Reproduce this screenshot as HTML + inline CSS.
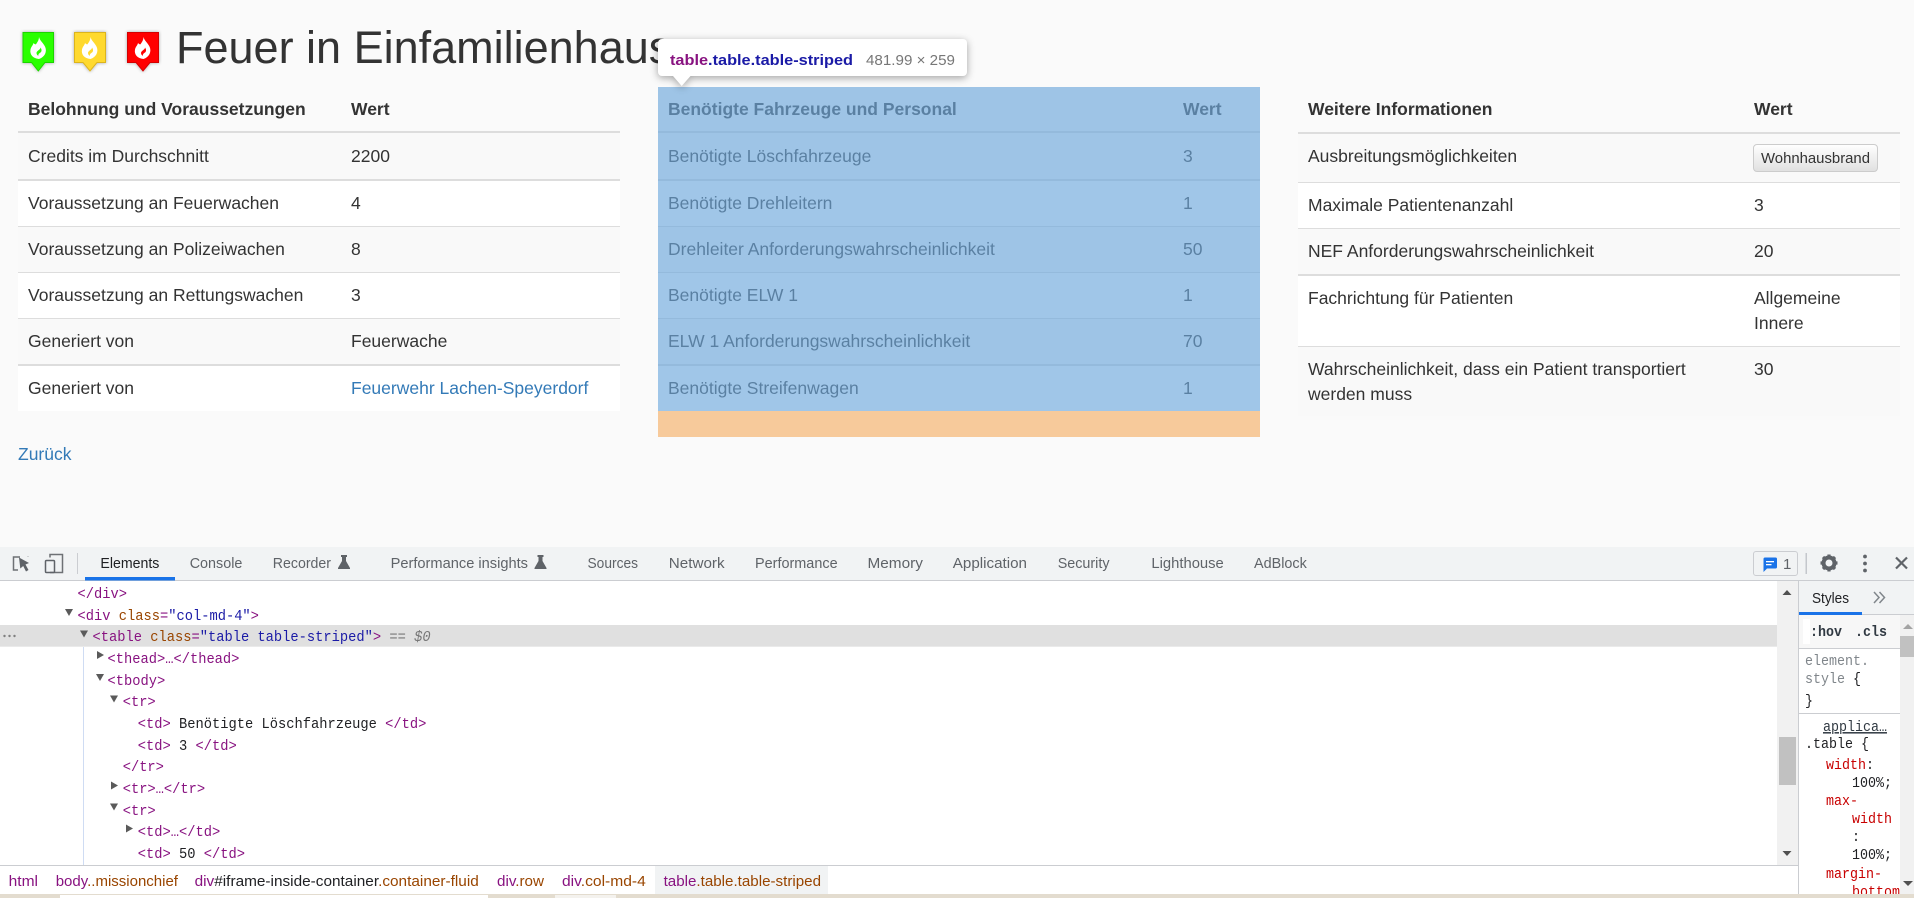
<!DOCTYPE html>
<html lang="de"><head><meta charset="utf-8"><title>Feuer in Einfamilienhaus</title>
<style>
html,body{margin:0;padding:0;width:1914px;height:898px;overflow:hidden;background:#fafafa}
svg{display:block;position:absolute;left:0;top:0}
.s{font:17.5px "Liberation Sans",sans-serif;fill:#333}
.b{font:bold 17.5px "Liberation Sans",sans-serif;fill:#333}
.l{fill:#337ab7}
.t{font:15px "Liberation Sans",sans-serif;fill:#5f6368}
.m{font:15px "Liberation Mono",monospace;fill:#881280}
.a{fill:#994500}.v{fill:#1a1aa6}.x{fill:#202124}.g{fill:#777}
.c{font:15px "Liberation Sans",sans-serif;fill:#881280}
</style></head><body>
<svg width="1914" height="898" viewBox="0 0 1914 898" xmlns="http://www.w3.org/2000/svg">
<defs>
<g id="fl"><path fill="#fff" fill-rule="evenodd" d="M9.5 0C10.5 4 14 6 15.7 10C17.6 14.5 15.5 20 9.5 22C3.5 21.5 0 17.5 1 12.5C1.6 9.5 3.5 8.5 4 6C5.5 7.5 6.3 8 7 6.5C8.4 4.5 9.5 2.5 9.5 0ZM11 10.5C11 13 7 13.5 7 16C7 17.5 8 18.5 9 18.8C8.5 17.5 9.5 16.5 11 15.5C12.3 14.5 12.5 12.5 11 10.5Z"/></g>
<filter id="ms" x="-30%" y="-30%" width="160%" height="160%"><feDropShadow dx="0" dy="0" stdDeviation="1.5" flood-color="#000" flood-opacity=".35"/></filter>
<clipPath id="cs"><rect x="1799" y="614" width="101" height="280"/></clipPath>
</defs>
<rect width="1914" height="898" fill="#fafafa"/>

<!-- markers -->
<g filter="url(#ms)">
<path d="M23 32.5H53.5V62.5H45L38.3 71L31.5 62.5H23Z" fill="#2bff00" stroke="#1fd400"/>
<path d="M74.5 32.5H105.5V62.5H97L90 71L83 62.5H74.5Z" fill="#ffd92f" stroke="#dcb41e"/>
<path d="M127.5 32.5H158.5V62.5H150L143 71L136 62.5H127.5Z" fill="#ff0000" stroke="#d40000"/>
</g>
<use href="#fl" x="29.5" y="37"/><use href="#fl" x="81" y="37"/><use href="#fl" x="134" y="37"/>
<text x="176" y="63" style="font:45px 'Liberation Sans',sans-serif;fill:#333">Feuer in Einfamilienhaus</text>

<!-- table 1 -->
<g>
<rect x="18" y="133" width="602" height="46" fill="#f9f9f9"/><rect x="18" y="180" width="602" height="46" fill="#fff"/><rect x="18" y="227" width="602" height="46" fill="#f9f9f9"/><rect x="18" y="273" width="602" height="46" fill="#fff"/><rect x="18" y="319" width="602" height="46" fill="#f9f9f9"/><rect x="18" y="366" width="602" height="45" fill="#fff"/>
<g fill="#ddd"><rect x="18" y="131" width="602" height="2"/><rect x="18" y="179" width="602" height="2"/><rect x="18" y="226" width="602" height="1"/><rect x="18" y="272" width="602" height="1"/><rect x="18" y="318" width="602" height="1"/><rect x="18" y="364" width="602" height="2"/></g>
<text class="b" x="28" y="115">Belohnung und Voraussetzungen</text><text class="b" x="351" y="115">Wert</text>
<text class="s" x="28" y="162">Credits im Durchschnitt</text><text class="s" x="351" y="162">2200</text>
<text class="s" x="28" y="209">Voraussetzung an Feuerwachen</text><text class="s" x="351" y="209">4</text>
<text class="s" x="28" y="255">Voraussetzung an Polizeiwachen</text><text class="s" x="351" y="255">8</text>
<text class="s" x="28" y="301">Voraussetzung an Rettungswachen</text><text class="s" x="351" y="301">3</text>
<text class="s" x="28" y="347">Generiert von</text><text class="s" x="351" y="347">Feuerwache</text>
<text class="s" x="28" y="394">Generiert von</text><text class="s l" x="351" y="394">Feuerwehr Lachen-Speyerdorf</text>
<text class="s l" x="18" y="460">Zurück</text>
</g>

<!-- table 2 -->
<g>
<rect x="658" y="133" width="602" height="46" fill="#f9f9f9"/><rect x="658" y="180" width="602" height="46" fill="#fff"/><rect x="658" y="227" width="602" height="46" fill="#f9f9f9"/><rect x="658" y="273" width="602" height="46" fill="#fff"/><rect x="658" y="319" width="602" height="46" fill="#f9f9f9"/><rect x="658" y="366" width="602" height="45" fill="#fff"/>
<g fill="#ddd"><rect x="658" y="131" width="602" height="2"/><rect x="658" y="179" width="602" height="2"/><rect x="658" y="226" width="602" height="1"/><rect x="658" y="272" width="602" height="1"/><rect x="658" y="318" width="602" height="1"/><rect x="658" y="364" width="602" height="2"/></g>
<text class="b" x="668" y="115">Benötigte Fahrzeuge und Personal</text><text class="b" x="1183" y="115">Wert</text>
<text class="s" x="668" y="162">Benötigte Löschfahrzeuge</text><text class="s" x="1183" y="162">3</text>
<text class="s" x="668" y="209">Benötigte Drehleitern</text><text class="s" x="1183" y="209">1</text>
<text class="s" x="668" y="255">Drehleiter Anforderungswahrscheinlichkeit</text><text class="s" x="1183" y="255">50</text>
<text class="s" x="668" y="301">Benötigte ELW 1</text><text class="s" x="1183" y="301">1</text>
<text class="s" x="668" y="347">ELW 1 Anforderungswahrscheinlichkeit</text><text class="s" x="1183" y="347">70</text>
<text class="s" x="668" y="394">Benötigte Streifenwagen</text><text class="s" x="1183" y="394">1</text>
<rect x="658" y="87" width="602" height="324" fill="rgba(111,168,220,.66)"/>
<rect x="658" y="411" width="602" height="26" fill="rgba(246,178,107,.66)"/>
</g>

<!-- table 3 -->
<g>
<rect x="1298" y="134" width="602" height="48" fill="#f9f9f9"/><rect x="1298" y="183" width="602" height="45" fill="#fff"/><rect x="1298" y="229" width="602" height="45" fill="#f9f9f9"/><rect x="1298" y="276" width="602" height="70" fill="#fff"/><rect x="1298" y="347" width="602" height="69" fill="#f9f9f9"/>
<g fill="#ddd"><rect x="1298" y="132" width="602" height="2"/><rect x="1298" y="182" width="602" height="1"/><rect x="1298" y="228" width="602" height="1"/><rect x="1298" y="274" width="602" height="2"/><rect x="1298" y="346" width="602" height="1"/></g>
<text class="b" x="1308" y="115">Weitere Informationen</text><text class="b" x="1754" y="115">Wert</text>
<text class="s" x="1308" y="162">Ausbreitungsmöglichkeiten</text>
<linearGradient id="bt" x1="0" y1="0" x2="0" y2="1"><stop offset="0" stop-color="#fff"/><stop offset="1" stop-color="#e0e0e0"/></linearGradient>
<rect x="1753.5" y="144.5" width="124" height="27" rx="3.5" fill="url(#bt)" stroke="#ccc"/>
<text x="1761" y="163" textLength="109" lengthAdjust="spacingAndGlyphs" style="font:15px 'Liberation Sans',sans-serif;fill:#333">Wohnhausbrand</text>
<text class="s" x="1308" y="211">Maximale Patientenanzahl</text><text class="s" x="1754" y="211">3</text>
<text class="s" x="1308" y="257">NEF Anforderungswahrscheinlichkeit</text><text class="s" x="1754" y="257">20</text>
<text class="s" x="1308" y="304">Fachrichtung für Patienten</text><text class="s" x="1754" y="304">Allgemeine</text><text class="s" x="1754" y="329">Innere</text>
<text class="s" x="1308" y="375">Wahrscheinlichkeit, dass ein Patient transportiert</text><text class="s" x="1754" y="375">30</text><text class="s" x="1308" y="400">werden muss</text>
</g>

<!-- tooltip -->
<g style="filter:drop-shadow(0 2px 4px rgba(0,0,0,.35))">
<rect x="658" y="39" width="309" height="37" rx="4" fill="#fff"/>
<path d="M673 76H690.5L681.7 86Z" fill="#fff"/>
</g>
<text x="670" y="65" textLength="183" lengthAdjust="spacingAndGlyphs" style="font:bold 15px 'Liberation Sans',sans-serif;fill:#1a1aa6"><tspan fill="#881280">table</tspan>.table.table-striped</text>
<text x="866" y="65" textLength="89" lengthAdjust="spacingAndGlyphs" style="font:15px 'Liberation Sans',sans-serif;fill:#777">481.99 × 259</text>

<!-- devtools -->
<rect x="0" y="547" width="1914" height="351" fill="#fff"/>
<rect x="0" y="547" width="1914" height="33" fill="#f1f3f4"/>
<rect x="0" y="580" width="1914" height="1" fill="#cbcdd1"/>
<!-- inspect + device icons -->
<path d="M20 557H13.5V570H18" fill="none" stroke="#6e7175" stroke-width="1.5"/><path d="M28 556.5V557" stroke="#6e7175" fill="none"/>
<path d="M19 557.5L29 563L25.5 564.5L28.5 570L26 571.5L23.2 566L20.3 568.5Z" fill="#5f6368"/>
<path d="M50 557.5V554.5H62.5V572.5H50" fill="none" stroke="#6e7175" stroke-width="1.5"/>
<rect x="45.5" y="560.5" width="9" height="12" rx="1" fill="none" stroke="#5f6368" stroke-width="1.5"/>
<rect x="77" y="553" width="1" height="21" fill="#cbcdd1"/>
<rect x="85" y="577" width="90" height="3.5" fill="#1a73e8"/>
<text class="t" x="100.4" y="568" textLength="59" lengthAdjust="spacingAndGlyphs" style="fill:#202124">Elements</text>
<text class="t" x="189.7" y="568" textLength="52.7" lengthAdjust="spacingAndGlyphs">Console</text>
<text class="t" x="272.8" y="568" textLength="58.2" lengthAdjust="spacingAndGlyphs">Recorder</text>
<path d="M341 555H347V557H346V561L350 568V569H338V568L342 561V557H341Z" fill="#5f6368"/>
<text class="t" x="390.6" y="568" textLength="137.4" lengthAdjust="spacingAndGlyphs">Performance insights</text>
<path d="M537.5 555H543.5V557H542.5V561L546.5 568V569H534.5V568L538.5 561V557H537.5Z" fill="#5f6368"/>
<text class="t" x="587.5" y="568" textLength="50.5" lengthAdjust="spacingAndGlyphs">Sources</text>
<text class="t" x="668.8" y="568" textLength="55.8" lengthAdjust="spacingAndGlyphs">Network</text>
<text class="t" x="755" y="568" textLength="82.6" lengthAdjust="spacingAndGlyphs">Performance</text>
<text class="t" x="867.5" y="568" textLength="55.4" lengthAdjust="spacingAndGlyphs">Memory</text>
<text class="t" x="952.8" y="568" textLength="74.2" lengthAdjust="spacingAndGlyphs">Application</text>
<text class="t" x="1057.7" y="568" textLength="51.8" lengthAdjust="spacingAndGlyphs">Security</text>
<text class="t" x="1151.4" y="568" textLength="72.4" lengthAdjust="spacingAndGlyphs">Lighthouse</text>
<text class="t" x="1254" y="568" textLength="52.8" lengthAdjust="spacingAndGlyphs">AdBlock</text>

<!-- top-right controls -->
<rect x="1753.5" y="551.5" width="44" height="24" rx="2.5" fill="none" stroke="#cbcdd1"/>
<path d="M1765 557.5H1775.5A1.5 1.5 0 0 1 1777 559V567A1.5 1.5 0 0 1 1775.5 568.5H1767L1763.5 572V559A1.5 1.5 0 0 1 1765 557.5Z" fill="#1a73e8"/>
<rect x="1766" y="561" width="8" height="1.3" fill="#fff"/><rect x="1766" y="564" width="5.5" height="1.3" fill="#fff"/>
<text class="t" x="1783" y="569" style="font-size:15px">1</text>
<rect x="1805.5" y="553" width="1.5" height="21" fill="#c4c7cc"/>
<g fill="#5f6368"><circle cx="1829" cy="563" r="5.5" fill="none" stroke="#5f6368" stroke-width="4"/><g stroke="#5f6368" stroke-width="3.2"><path d="M1829 554.5V557"/><path d="M1829 569V571.5"/><path d="M1820.5 563H1823"/><path d="M1835 563H1837.5"/><path d="M1823 557L1824.8 558.8"/><path d="M1833.2 567.2L1835 569"/><path d="M1835 557L1833.2 558.8"/><path d="M1824.8 567.2L1823 569"/></g></g>
<g fill="#5f6368"><circle cx="1865" cy="556.5" r="1.9"/><circle cx="1865" cy="563.5" r="1.9"/><circle cx="1865" cy="570.5" r="1.9"/></g>
<path d="M1896 557.5L1907 568.5M1907 557.5L1896 568.5" stroke="#5f6368" stroke-width="2.2" fill="none"/>

<!-- selected row & guide -->
<rect x="0" y="625" width="1777" height="21.7" fill="#e0e0e0"/>
<rect x="83" y="647" width="1" height="218" fill="#cfdcf3"/>
<g fill="#808080"><circle cx="4.5" cy="636" r="1.2"/><circle cx="9.5" cy="636" r="1.2"/><circle cx="14.5" cy="636" r="1.2"/></g>
<!-- triangles -->
<g fill="#5a5a5a">
<path d="M65 609H73L69 616Z"/><path d="M80 630.5H88L84 637.5Z"/><path d="M97 651L104 655L97 659Z"/><path d="M96 674H104L100 681Z"/><path d="M110 695.5H118L114 702.5Z"/>
<path d="M111 781.5L118 785.5L111 789.5Z"/><path d="M110 803.5H118L114 810.5Z"/><path d="M126 824.5L133 828.5L126 832.5Z"/>
</g>
<!-- DOM lines -->
<text class="m" transform="translate(77.5 598) scale(.917 1)">&lt;/div&gt;</text>
<text class="m" transform="translate(77.5 620) scale(.917 1)">&lt;div <tspan class="a">class</tspan>=<tspan class="v">"col-md-4"</tspan>&gt;</text>
<text class="m" transform="translate(92.5 641) scale(.917 1)">&lt;table <tspan class="a">class</tspan>=<tspan class="v">"table table-striped"</tspan>&gt; <tspan class="g">== </tspan><tspan class="g" style="font-style:italic">$0</tspan></text>
<text class="m" transform="translate(107.5 663) scale(.917 1)">&lt;thead&gt;…&lt;/thead&gt;</text>
<text class="m" transform="translate(107.5 685) scale(.917 1)">&lt;tbody&gt;</text>
<text class="m" transform="translate(122.7 706) scale(.917 1)">&lt;tr&gt;</text>
<text class="m" transform="translate(137.8 728) scale(.917 1)">&lt;td&gt;<tspan class="x"> Benötigte Löschfahrzeuge </tspan>&lt;/td&gt;</text>
<text class="m" transform="translate(137.8 750) scale(.917 1)">&lt;td&gt;<tspan class="x"> 3 </tspan>&lt;/td&gt;</text>
<text class="m" transform="translate(122.7 771) scale(.917 1)">&lt;/tr&gt;</text>
<text class="m" transform="translate(122.7 793) scale(.917 1)">&lt;tr&gt;…&lt;/tr&gt;</text>
<text class="m" transform="translate(122.7 815) scale(.917 1)">&lt;tr&gt;</text>
<text class="m" transform="translate(137.8 836) scale(.917 1)">&lt;td&gt;…&lt;/td&gt;</text>
<text class="m" transform="translate(137.8 858) scale(.917 1)">&lt;td&gt;<tspan class="x"> 50 </tspan>&lt;/td&gt;</text>

<!-- main scrollbar -->
<rect x="1777" y="581" width="21" height="284" fill="#f1f1f1"/>
<rect x="1779" y="737" width="17" height="48" fill="#c1c1c1"/>
<path d="M1782.5 595H1791.5L1787 590Z" fill="#505050"/><path d="M1782.5 851H1791.5L1787 856Z" fill="#505050"/>

<!-- breadcrumbs -->
<rect x="0" y="865" width="1798" height="1" fill="#cbcdd1"/>
<rect x="655" y="866" width="173" height="28" fill="#f1f3f4"/>
<text class="c" x="8.6" y="886" textLength="29.4" lengthAdjust="spacingAndGlyphs">html</text>
<text class="c" x="55.7" y="886" textLength="122.3" lengthAdjust="spacingAndGlyphs">body<tspan class="a">..missionchief</tspan></text>
<text class="c" x="194.6" y="886" textLength="284.2" lengthAdjust="spacingAndGlyphs">div<tspan fill="#202124">#iframe-inside-container</tspan><tspan class="a">.container-fluid</tspan></text>
<text class="c" x="497" y="886" textLength="47" lengthAdjust="spacingAndGlyphs">div<tspan class="a">.row</tspan></text>
<text class="c" x="562" y="886" textLength="83.8" lengthAdjust="spacingAndGlyphs">div<tspan class="a">.col-md-4</tspan></text>
<text class="c" x="663.6" y="886" textLength="157.4" lengthAdjust="spacingAndGlyphs">table<tspan class="a">.table.table-striped</tspan></text>

<!-- styles pane -->
<rect x="1798" y="581" width="1" height="317" fill="#cbcdd1"/>
<rect x="1799" y="581" width="115" height="33" fill="#f1f3f4"/>
<rect x="1799" y="614" width="115" height="1" fill="#cbcdd1"/>
<rect x="1799" y="612" width="63" height="3" fill="#1a73e8"/>
<text class="t" x="1812" y="603" textLength="37" lengthAdjust="spacingAndGlyphs" style="fill:#202124">Styles</text>
<path d="M1874 592L1879 597.5L1874 603M1879.5 592L1884.5 597.5L1879.5 603" fill="none" stroke="#80868b" stroke-width="1.5"/>
<rect x="1799" y="615" width="101" height="33" fill="#f7f7f7"/>
<rect x="1803" y="619" width="7" height="25" fill="#fff"/>
<rect x="1799" y="648" width="101" height="1" fill="#cbcdd1"/>
<rect x="1799" y="713" width="101" height="1" fill="#cbcdd1"/>
<g clip-path="url(#cs)">
<text transform="translate(1810 636) scale(.889 1)" style="font:bold 15px 'Liberation Mono',monospace;fill:#303942">:hov</text>
<text transform="translate(1855 636) scale(.889 1)" style="font:bold 15px 'Liberation Mono',monospace;fill:#303942">.cls</text>
<text class="m" transform="translate(1805 665) scale(.889 1)" style="fill:#80868b">element.</text>
<text class="m" transform="translate(1805 683) scale(.889 1)" style="fill:#80868b">style <tspan class="x">{</tspan></text>
<text class="m x" transform="translate(1805 705) scale(.889 1)" style="fill:#202124">}</text>
<text class="m" transform="translate(1823 731) scale(.889 1)" style="fill:#303942;text-decoration:underline">applica…</text>
<text class="m" transform="translate(1805 748) scale(.889 1)" style="fill:#202124">.table {</text>
<text class="m" transform="translate(1826 769) scale(.889 1)" style="fill:#c80000">width<tspan fill="#202124">:</tspan></text>
<text class="m" transform="translate(1852 787) scale(.889 1)" style="fill:#202124">100%;</text>
<text class="m" transform="translate(1826 805) scale(.889 1)" style="fill:#c80000">max-</text>
<text class="m" transform="translate(1852 823) scale(.889 1)" style="fill:#c80000">width</text>
<text class="m" transform="translate(1852 841) scale(.889 1)" style="fill:#202124">:</text>
<text class="m" transform="translate(1852 859) scale(.889 1)" style="fill:#202124">100%;</text>
<text class="m" transform="translate(1826 878) scale(.889 1)" style="fill:#c80000">margin-</text>
<text class="m" transform="translate(1852 896) scale(.889 1)" style="fill:#c80000">bottom</text>
</g>
<rect x="1900" y="615" width="14" height="280" fill="#f1f1f1"/>
<rect x="1900" y="636" width="14" height="21" fill="#c1c1c1"/>
<path d="M1903 629H1913L1908 624Z" fill="#a3a3a3"/><path d="M1903 881H1913L1908 886Z" fill="#505050"/>

<!-- bottom strip -->
<rect x="0" y="894" width="1914" height="4" fill="#e3dccf"/>
<rect x="60" y="895" width="428" height="3" fill="#fff"/><rect x="555" y="895" width="61" height="3" fill="#f4f2ee"/>
</svg>
</body></html>
